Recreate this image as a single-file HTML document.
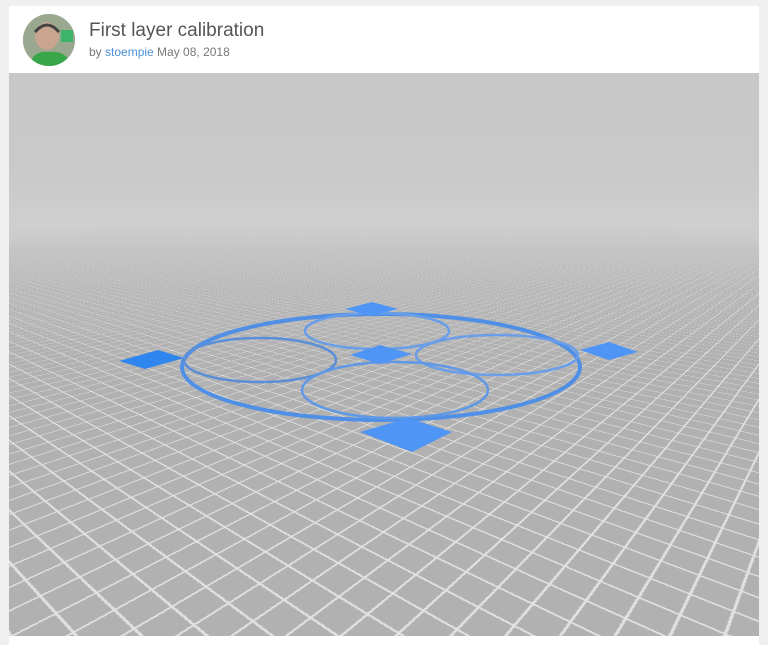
<!DOCTYPE html>
<html><head><style>
html,body{margin:0;padding:0;background:#efefef;width:768px;height:645px;overflow:hidden;font-family:"Liberation Sans",sans-serif}
.card{position:absolute;left:9px;top:6px;width:750px;height:639px;background:#fff;overflow:hidden}
.av{position:absolute;left:14px;top:8px;width:52px;height:52px;border-radius:50%;overflow:hidden;background:#8a9a80}
.title{position:absolute;left:80px;top:14px;font-size:19px;color:#555}
.by{position:absolute;left:80px;top:39px;font-size:12px;color:#777}
.by span{color:#4a90d9}
.scene{position:absolute;left:0;top:67px;width:750px;height:563px;overflow:hidden;contain:paint;clip-path:inset(0);background:#c8c8c8;perspective:600px;perspective-origin:375px 115px}
.plane{position:absolute;left:-2625px;top:-2885px;width:6000px;height:6000px;transform-origin:50% 50%;
transform:translate3d(0,448px,-2900px) rotateX(90deg);
background-color:#b1b1b1;
background-image:repeating-linear-gradient(40deg,#e2e2e2 0 2.8px,transparent 2.8px 42px),repeating-linear-gradient(-50deg,#e2e2e2 0 2.8px,transparent 2.8px 42px)}
.fog{position:absolute;left:0;top:0;width:750px;height:563px;background:linear-gradient(#c8c8c8 0,#c9c9c9 100px,#cfcfcf 150px,rgba(200,200,200,.85) 175px,rgba(195,195,195,.4) 215px,rgba(190,190,190,0) 290px)}
svg{position:absolute;left:0;top:0}
</style></head><body>
<div class="card">
<div class="av"><svg width="52" height="52"><rect width="52" height="52" fill="#9aa890"/><ellipse cx="24" cy="22" rx="12" ry="14" fill="#c9a590"/><path d="M6 52 Q10 36 26 38 Q44 36 48 52Z" fill="#3aa64a"/><rect x="38" y="16" width="12" height="12" fill="#3bb56a"/><path d="M12 18 Q24 4 36 18" stroke="#444" stroke-width="3" fill="none"/></svg></div>
<div class="title">First layer calibration</div>
<div class="by">by <span>stoempie</span> May 08, 2018</div>
<div class="scene">
<div class="plane"></div>
<div class="fog"></div>
<svg width="750" height="563" viewBox="9 73 750 563">
<g fill="none" stroke="#4f8fe6">
<ellipse cx="381" cy="367" rx="199" ry="53" stroke-width="4"/>
<ellipse cx="377" cy="331" rx="72" ry="18" stroke-width="2.5" stroke="#6a9ee8"/>
<ellipse cx="260" cy="360" rx="76" ry="22" stroke-width="2.5" stroke="#5a8fd8"/>
<ellipse cx="497" cy="355" rx="81" ry="20" stroke-width="2.5" stroke="#6a9ee8"/>
<ellipse cx="395" cy="390" rx="93" ry="28" stroke-width="2.5" stroke="#5f98e6"/>
</g>
<g fill="#4f95f5">
<polygon points="345,309 372,302 398,309 372,316"/>
<polygon points="119,361 158,350 184,358 145,369" fill="#2f86ef"/>
<polygon points="580,350 609,342 638,352 609,360"/>
<polygon points="350,355 380,345 412,354 380,364"/>
<polygon points="360,432 408,418 452,432 412,452"/>
</g>
</svg>
</div>
</div>
</body></html>
